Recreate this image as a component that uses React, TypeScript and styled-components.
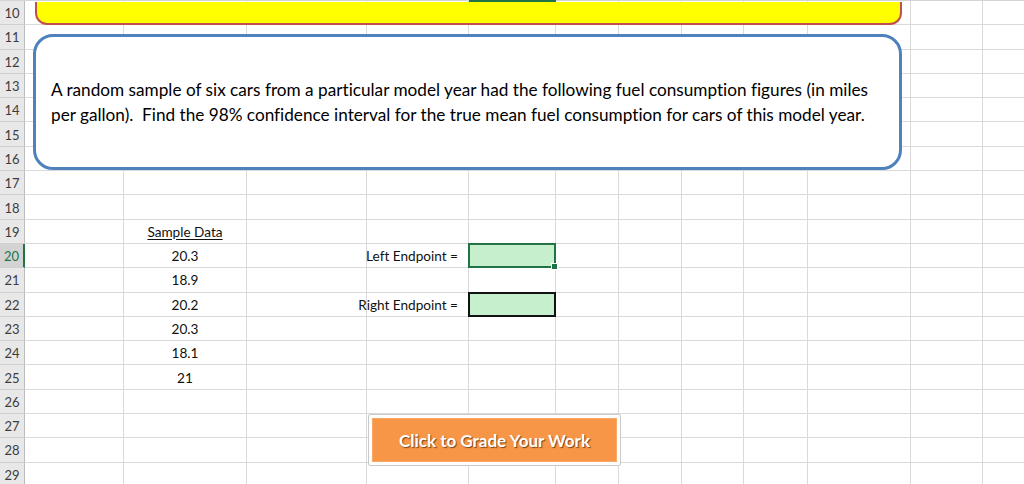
import React from "react";
import styled, { createGlobalStyle, css } from "styled-components";

const Global = createGlobalStyle`
  html, body { margin: 0; padding: 0; background: #ffffff; overflow: hidden; }
  body { font-family: Lato, "Noto Sans", sans-serif; font-variant-ligatures: none; }
`;

const COLS = [25, 99, 123, 120, 102, 87, 63, 63, 62, 64, 103, 72, 100];
const ROW_H = 24.3;
const ROWS = Array.from({ length: 20 }, (_, i) => i + 10);
const DATA_COLS = COLS.length - 1;

const Sheet = styled.div`
  position: relative;
  width: 1024px;
  height: 484px;
  overflow: hidden;
  background: #ffffff;
`;

const Grid = styled.div`
  display: grid;
  grid-template-columns: ${COLS.map((c) => `${c}px`).join(" ")};
  grid-template-rows: 1px repeat(20, ${ROW_H}px);
`;

const StripCell = styled.div<{ $active?: boolean }>`
  background: ${(p) => (p.$active ? "#217346" : "#d4d4d4")};
  ${(p) =>
    p.$active &&
    css`
      box-shadow: 0 1px 0 #217346;
      position: relative;
      z-index: 2;
    `}
`;

const RowHeader = styled.div<{ $selected?: boolean }>`
  box-sizing: border-box;
  display: flex;
  align-items: center;
  justify-content: center;
  font-family: Lato, "Noto Sans", sans-serif;
  font-size: 13px;
  color: ${(p) => (p.$selected ? "#217346" : "#3c3c3c")};
  background: ${(p) => (p.$selected ? "#d3d3d3" : "#e8e8e8")};
  border-bottom: 1px solid #d0d0d0;
  border-right: ${(p) => (p.$selected ? "2px solid #217346" : "1px solid #bdbdbd")};
  padding-top: 1px;
`;

const Cell = styled.div<{ $align?: "left" | "center" | "right" }>`
  position: relative;
  box-sizing: border-box;
  display: flex;
  align-items: center;
  justify-content: ${(p) =>
    p.$align === "right" ? "flex-end" : p.$align === "center" ? "center" : "flex-start"};
  padding: 1px ${(p) => (p.$align === "right" ? "10px" : "3px")} 0 3px;
  border-right: 1px solid #dadada;
  border-bottom: 1px solid #dadada;
  font-family: Lato, "Noto Sans", sans-serif;
  font-size: 13.6px;
  color: #111111;
  white-space: nowrap;
`;

const Heading = styled.span`
  text-decoration: underline;
  text-underline-offset: 2px;
`;

const AnswerBox = styled.div<{ $selected?: boolean }>`
  position: absolute;
  inset: -1px -1px -1px -1px;
  background: #c6efce;
  border: 2px solid ${(p) => (p.$selected ? "#217346" : "#111111")};
  z-index: 2;
`;

const FillHandle = styled.div`
  position: absolute;
  right: -4px;
  bottom: -4px;
  width: 5px;
  height: 5px;
  background: #217346;
  border: 1px solid #ffffff;
`;

const Banner = styled.div`
  position: absolute;
  left: 35px;
  top: 2px;
  width: 867px;
  height: 23px;
  box-sizing: border-box;
  background: #ffff00;
  border: 2px solid #c0504d;
  border-top: none;
  border-radius: 0 0 12px 12px;
  z-index: 3;
`;

const QuestionBox = styled.div`
  position: absolute;
  left: 33px;
  top: 34px;
  width: 869px;
  height: 136px;
  box-sizing: border-box;
  background: #ffffff;
  border: 3px solid #4f81bd;
  border-radius: 20px;
  display: flex;
  flex-direction: column;
  justify-content: center;
  padding: 0 0 0 15px;
  z-index: 3;
`;

const QuestionLine = styled.div`
  font-family: Lato, "Noto Sans", sans-serif;
  font-size: 17.2px;
  line-height: 25px;
  color: #000000;
  white-space: nowrap;
`;

const ButtonFrame = styled.div`
  position: absolute;
  left: 368px;
  top: 414px;
  width: 253px;
  height: 52px;
  box-sizing: border-box;
  padding: 3px;
  background: #ffffff;
  border: 1px solid #c9c9c9;
  border-radius: 2px;
  display: flex;
  z-index: 3;
`;

const GradeButton = styled.button`
  flex: 1;
  border: 1px solid #f9a866;
  background: #f79646;
  color: #ffffff;
  font-family: Lato, "Noto Sans", sans-serif;
  font-weight: 700;
  font-size: 17px;
  text-shadow: 1px 1px 1px rgba(80, 40, 10, 0.75);
  cursor: pointer;
  padding: 0;
`;

type Content = { node: React.ReactNode; align?: "left" | "center" | "right" };

const cells: Record<string, Content> = {
  "19-2": { node: <Heading>Sample Data</Heading>, align: "center" },
  "20-2": { node: "20.3", align: "center" },
  "21-2": { node: "18.9", align: "center" },
  "22-2": { node: "20.2", align: "center" },
  "23-2": { node: "20.3", align: "center" },
  "24-2": { node: "18.1", align: "center" },
  "25-2": { node: "21", align: "center" },
  "20-4": { node: "Left Endpoint =", align: "right" },
  "22-4": { node: "Right Endpoint =", align: "right" },
};

export default function App() {
  return (
    <>
      <Global />
      <Sheet>
        <Grid>
          {COLS.map((_, c) => (
            <StripCell key={`s-${c}`} $active={c === 5} />
          ))}
          {ROWS.map((r) => (
            <React.Fragment key={r}>
              <RowHeader $selected={r === 20}>{r}</RowHeader>
              {Array.from({ length: DATA_COLS }, (_, i) => {
                const c = i + 1;
                const content = cells[`${r}-${c}`];
                return (
                  <Cell key={c} $align={content?.align}>
                    {content?.node}
                    {r === 20 && c === 5 && (
                      <AnswerBox $selected>
                        <FillHandle />
                      </AnswerBox>
                    )}
                    {r === 22 && c === 5 && <AnswerBox />}
                  </Cell>
                );
              })}
            </React.Fragment>
          ))}
        </Grid>
        <Banner />
        <QuestionBox>
          <QuestionLine>
            A random sample of six cars from a particular model year had the following fuel consumption figures (in miles
          </QuestionLine>
          <QuestionLine>
            per gallon).&nbsp; Find the 98% confidence interval for the true mean fuel consumption for cars of this model year.
          </QuestionLine>
        </QuestionBox>
        <ButtonFrame>
          <GradeButton type="button">Click to Grade Your Work</GradeButton>
        </ButtonFrame>
      </Sheet>
    </>
  );
}
